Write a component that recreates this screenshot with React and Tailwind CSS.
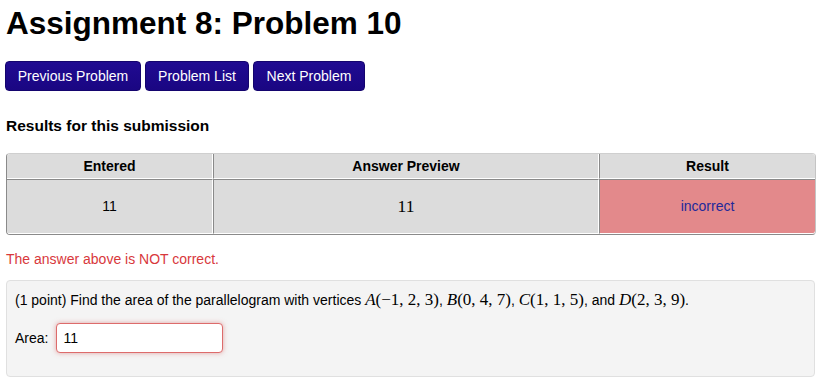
import React from "react";

const sans = { fontFamily: '"Liberation Sans", Arial, Helvetica, sans-serif' };
const serif = { fontFamily: '"Liberation Serif", "Times New Roman", serif' };

function M({ children }) {
  return (
    <span className="text-[17px]" style={serif}>
      {children}
    </span>
  );
}
function I({ children }) {
  return <span className="italic">{children}</span>;
}

const buttons = [
  { t: "Previous Problem", w: "w-[136px]" },
  { t: "Problem List", w: "w-[104px]" },
  { t: "Next Problem", w: "w-[112px]" },
];

export default function App() {
  return (
    <div className="bg-white w-[825px] h-[382px] overflow-hidden text-black" style={sans}>
      <div className="pl-[6px] w-[816px]">
        <h1 className="mt-[5px] text-[31.5px] leading-[36px] font-bold">Assignment 8: Problem 10</h1>

        <div className="mt-[20px] flex gap-[4px] ml-[-1px]">
          {buttons.map(({ t, w }) => (
            <button
              key={t}
              className={`${w} h-[30px] flex items-center justify-center whitespace-nowrap rounded-[4px] border border-[#14046e] bg-gradient-to-b from-[#200b92] to-[#1a0682] text-white text-[14px] leading-[16px]`}
              style={sans}
            >
              {t}
            </button>
          ))}
        </div>

        <div className="mt-[26px] text-[15.5px] leading-[18px] font-bold">Results for this submission</div>

        <div className="mt-[18px] w-[810px] rounded-[4px] border border-t-[#cfcfcf] border-r-[#c4c4c4] border-l-[#8a8a8a] border-b-[#8a8a8a] overflow-hidden">
          <div className="grid grid-cols-[206px_386px_216px] text-[14px] font-bold">
            <div className="h-[25px] bg-[#dcdcdc] border-b border-r border-white flex items-center justify-center">Entered</div>
            <div className="h-[25px] bg-[#dcdcdc] border-b border-r border-b-white border-r-white border-l border-l-[#8a8a8a] flex items-center justify-center">Answer Preview</div>
            <div className="h-[25px] bg-[#dcdcdc] border-b border-b-white border-l border-l-[#8a8a8a] flex items-center justify-center">Result</div>
          </div>
          <div className="grid grid-cols-[206px_386px_216px] text-[14px]">
            <div className="h-[55px] bg-[#dcdcdc] border-t border-t-[#8a8a8a] border-b border-r border-b-white border-r-white flex items-center justify-center">11</div>
            <div className="h-[55px] bg-[#dcdcdc] border-t border-t-[#8a8a8a] border-b border-r border-b-white border-r-white border-l border-l-[#8a8a8a] flex items-center justify-center">
              <span className="text-[17.5px]" style={serif}>11</span>
            </div>
            <div className="h-[55px] bg-[#e3898b] border-t border-t-[#8a8a8a] border-b border-b-white border-l border-l-[#8a8a8a] rounded-br-[3px] flex items-center justify-center text-[#22289a]">incorrect</div>
          </div>
        </div>

        <div className="mt-[16px] text-[14px] leading-[16px] text-[#d8383c]">The answer above is NOT correct.</div>

        <div className="mt-[13px] w-[809px] rounded-[4px] border border-[#e0e0e0] bg-[#f4f4f4] pl-[8px] pt-[9px] pb-[23px]">
          <div className="text-[14px] leading-[20px]">
            (1 point) Find the area of the parallelogram with vertices{" "}
            <M>
              <I>A</I>(−1, 2, 3)
            </M>
            ,{" "}
            <M>
              <I>B</I>(0, 4, 7)
            </M>
            ,{" "}
            <M>
              <I>C</I>(1, 1, 5)
            </M>
            , and{" "}
            <M>
              <I>D</I>(2, 3, 9)
            </M>
            .
          </div>
          <div className="mt-[13px] flex items-center gap-[8px] text-[14px]">
            <span>Area:</span>
            <div className="w-[167px] h-[30px] rounded-[4px] border border-[#dd6b6b] bg-white shadow-[0_0_5px_rgba(213,100,100,0.55)] flex items-center pl-[6px]">
              11
            </div>
          </div>
        </div>
      </div>
    </div>
  );
}
